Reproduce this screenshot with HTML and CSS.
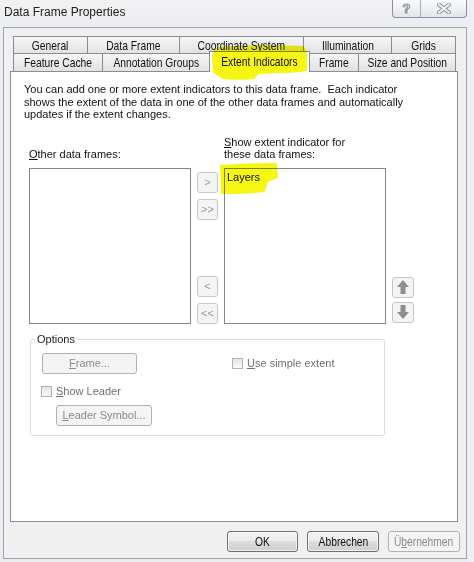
FILE: index.html
```html
<!DOCTYPE html>
<html lang="de">
<head>
    <meta charset="UTF-8">
    <meta name="viewport" content="width=device-width, initial-scale=1.0">
    <title>Data Frame Properties</title>
    <link rel="stylesheet" href="styles.css">
</head>
<body>
    <div class="window">
        <div class="titlebar">
            <span class="title">Data Frame Properties</span>
            <div class="caption-btns">
                <span class="cap-help">?</span>
                <span class="cap-close">
                    <svg width="14" height="11" viewBox="0 0 14 11">
                        <path d="M2,1.5 L12,9.5 M12,1.5 L2,9.5" stroke="#8b8f96" stroke-width="4" stroke-linecap="square"/>
                        <path d="M2,1.5 L12,9.5 M12,1.5 L2,9.5" stroke="#eef0f2" stroke-width="2" stroke-linecap="square"/>
                    </svg>
                </span>
            </div>
        </div>

        <div class="client">
            <!-- Tab-Reihen -->
            <div class="tabs">
                <div class="tab-row back">
                    <div class="tab t-general"><span class="lbl">General</span></div>
                    <div class="tab t-dataframe"><span class="lbl">Data Frame</span></div>
                    <div class="tab t-coord"><span class="lbl">Coordinate System</span></div>
                    <div class="tab t-illum"><span class="lbl">Illumination</span></div>
                    <div class="tab t-grids"><span class="lbl">Grids</span></div>
                </div>
                <div class="tab-row front">
                    <div class="tab t-cache"><span class="lbl">Feature Cache</span></div>
                    <div class="tab t-annot"><span class="lbl">Annotation Groups</span></div>
                    <div class="tab t-extent active"><span class="lbl">Extent Indicators</span></div>
                    <div class="tab t-frame"><span class="lbl">Frame</span></div>
                    <div class="tab t-size"><span class="lbl">Size and Position</span></div>
                </div>
            </div>

            <div class="panel">
                <p class="intro">You can add one or more extent indicators to this data frame.&nbsp; Each indicator<br>shows the extent of the data in one of the other data frames and automatically<br>updates if the extent changes.</p>

                <div class="lists">
                    <label class="list-label col1"><u>O</u>ther data frames:</label>
                    <label class="list-label col3"><u>S</u>how extent indicator for<br>these data frames:</label>

                    <div class="listbox col1"></div>
                    <div class="move-btns">
                        <div class="btn-pair">
                            <span class="sbtn">&gt;</span>
                            <span class="sbtn">&gt;&gt;</span>
                        </div>
                        <div class="btn-pair">
                            <span class="sbtn">&lt;</span>
                            <span class="sbtn">&lt;&lt;</span>
                        </div>
                    </div>
                    <div class="listbox col3">
                        <div class="item">Layers</div>
                    </div>
                    <div class="order-btns">
                        <span class="sbtn wide">
                            <svg width="14" height="16" viewBox="0 0 14 16"><path d="M7,1 L13,8 L9.5,8 L9.5,15 L4.5,15 L4.5,8 L1,8 Z" fill="#8e8e8e"/></svg>
                        </span>
                        <span class="sbtn wide">
                            <svg width="14" height="16" viewBox="0 0 14 16"><path d="M7,15 L13,8 L9.5,8 L9.5,1 L4.5,1 L4.5,8 L1,8 Z" fill="#8e8e8e"/></svg>
                        </span>
                    </div>
                </div>

                <div class="group">
                    <div class="group-title">Options</div>
                    <div class="opt-row row1">
                        <span class="btn disabled b-frame"><u>F</u>rame...</span>
                        <span class="check use"><span class="box"></span><span><u>U</u>se simple extent</span></span>
                    </div>
                    <div class="opt-row row2">
                        <span class="check"><span class="box"></span><span><u>S</u>how Leader</span></span>
                    </div>
                    <div class="opt-row row3">
                        <span class="btn disabled b-leader"><u>L</u>eader Symbol...</span>
                    </div>
                </div>
            </div>

            <div class="dialog-btns">
                <span class="btn big"><span class="lbl">OK</span></span>
                <span class="btn big"><span class="lbl">Abbrechen</span></span>
                <span class="btn big disabled"><span class="lbl">Ü<u>b</u>ernehmen</span></span>
            </div>
        </div>

        <!-- gelbe Markierungen -->
        <svg class="marker" width="467" height="562" viewBox="0 0 467 562">
            <path d="M219,48 C245,46 280,46 303,47 L306,53 L306,70 C300,72 280,72 258,73 L254,78 C245,79 232,79 223,78 L214,72 L213,56 L215,51 Z" fill="#f6f614" stroke="#f6f614" stroke-width="2" stroke-linejoin="round"/>
            <path d="M221,166 C240,164 262,164 276,164 L277,177 L267,181 L264,191 C250,193 235,193 222,193 Z" fill="#f6f614" stroke="#f6f614" stroke-width="2" stroke-linejoin="round"/>
        </svg>
    </div>
</body>
</html>
```

FILE: styles.css
```css
body { margin: 0; background: #f1edf4; font-family: "Liberation Sans", Arial, sans-serif; font-size: 11px; color: #111; }

.window { position: relative; width: 467px; height: 562px; background: linear-gradient(#f4f1f4, #eaedf0 30px, #eaedf0); }

/* Titelleiste */
.titlebar { display: flex; justify-content: space-between; align-items: flex-start; height: 27px; }
.title { padding: 5px 0 0 4px; font-size: 12px; color: #222; }
.caption-btns { display: flex; height: 17px; border: 1px solid #8a909b; border-top: none; border-radius: 0 0 4px 4px; background: linear-gradient(#fbfbfc, #e2e5e9); overflow: hidden; }
.cap-help { width: 27px; border-right: 1px solid #a8adb6; display: flex; align-items: center; justify-content: center; font-size: 13px; font-weight: bold; color: #eef0f2; -webkit-text-stroke: 1px #8b8f96; }
.cap-close { width: 45px; display: flex; align-items: center; justify-content: center; }

.client { margin-left: 3px; width: 464px; height: 532px; box-sizing: border-box; border: 1px solid #9da3ab; background: #f0f0f0; padding-top: 8px; }

/* Tabs */
.tabs { margin-left: 9px; }
.tab-row { display: flex; }
.tab-row.back { height: 17px; }
.tab-row.front { height: 18px; align-items: flex-end; }
.tab { box-sizing: border-box; height: 100%; display: flex; align-items: center; justify-content: center; border: 1px solid #898c95; border-right: none; border-bottom: none; background: linear-gradient(#f6f6f6, #e2e2e2); color: #111; }
.tab:last-child { border-right: 1px solid #898c95; }
.tab .lbl, .btn.big .lbl { display: inline-block; font-size: 13px; transform: scaleX(.79); white-space: nowrap; }
.tab.active { height: 21px; margin-bottom: -1px; margin-right: -1px; padding-bottom: 2px; border-right: 1px solid #898c95; background: #fff; position: relative; z-index: 1; }

.t-general { width: 74px; }
.t-dataframe { width: 92px; }
.t-coord { width: 124px; }
.t-illum { width: 88px; }
.t-grids { width: 65px; }
.t-cache { width: 89px; }
.t-annot { width: 107px; }
.t-extent { width: 101px; }
.t-frame { width: 49px; }
.t-size { width: 98px; }

.panel { margin-left: 6px; width: 448px; height: 451px; box-sizing: border-box; border: 1px solid #898c95; background: #fff; }
.intro { margin: 0; padding: 11px 0 0 13px; line-height: 12.5px; white-space: nowrap; }

/* Listen */
.lists { display: grid; grid-template-columns: 162px 21px 162px 22px; grid-template-rows: 25px 156px; column-gap: 6px; row-gap: 7px; margin-top: 15px; padding-left: 18px; }
.col1 { grid-column: 1; }
.col3 { grid-column: 3; }
.list-label { align-self: end; line-height: 12.5px; grid-row: 1; }
.listbox { grid-row: 2; border: 1px solid #828790; box-sizing: border-box; background: #fff; }
.item { padding: 2px 2px; line-height: 13px; color: #111; }

.move-btns { grid-row: 2; grid-column: 2; display: flex; flex-direction: column; justify-content: space-between; padding-top: 4px; }
.btn-pair { display: flex; flex-direction: column; gap: 6px; }
.order-btns { grid-row: 2; grid-column: 4; display: flex; flex-direction: column; justify-content: flex-end; gap: 4px; padding-bottom: 1px; }
.sbtn { width: 21px; height: 21px; box-sizing: border-box; border: 1px solid #c4c6c8; border-radius: 3px; background: #f4f4f4; color: #9b9b9b; display: flex; align-items: center; justify-content: center; font-size: 11px; }
.sbtn.wide { width: 22px; }

/* Options */
.group { margin: 15px 0 0 19px; width: 355px; box-sizing: border-box; border: 1px solid #d5dfe5; border-radius: 3px; padding-bottom: 9px; }
.group-title { width: fit-content; margin: -7px 0 0 4px; padding: 0 2px; background: #fff; line-height: 13px; color: #222; }
.opt-row { display: flex; align-items: center; }
.row1 { margin-top: 7px; padding-left: 11px; }
.row2 { margin-top: 11px; padding-left: 10px; height: 13px; }
.row3 { margin-top: 7px; padding-left: 25px; }
.check { display: flex; align-items: center; gap: 4px; color: #707070; line-height: 13px; }
.check.use { margin-left: 95px; }
.box { width: 11px; height: 11px; box-sizing: border-box; border: 1px solid #b1b1b1; background: linear-gradient(#e6e6e6, #fafafa); }

/* Knoepfe */
.btn { height: 21px; box-sizing: border-box; border: 1px solid #707070; border-radius: 3px; background: linear-gradient(#f2f2f2 0%, #ebebeb 45%, #dddddd 50%, #cfcfcf 100%); box-shadow: inset 0 0 0 1px rgba(255,255,255,.7); display: flex; align-items: center; justify-content: center; color: #111; }
.btn.disabled { border-color: #adb2b5; background: #f4f4f4; box-shadow: none; color: #8a8a8a; }
.b-frame { width: 95px; }
.b-leader { width: 96px; }
.dialog-btns { display: flex; justify-content: flex-end; gap: 9px; margin-top: 9px; padding-right: 6px; }
.btn.big { width: 72px; }
.btn.big:first-child { width: 71px; }

.marker { position: absolute; top: 0; left: 0; z-index: 2; pointer-events: none; mix-blend-mode: multiply; }
```
